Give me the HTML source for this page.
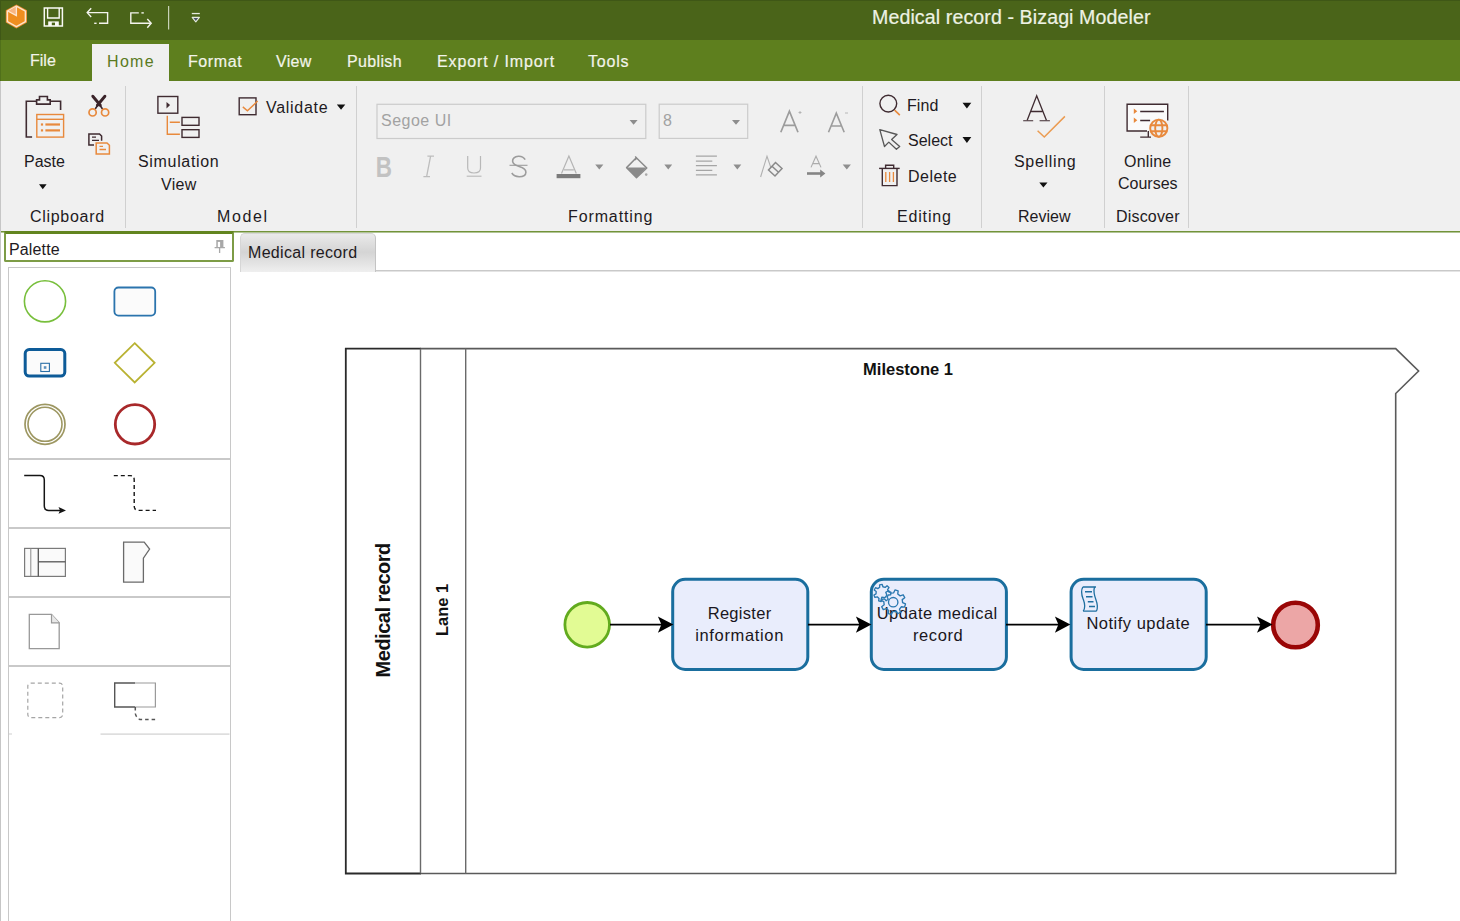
<!DOCTYPE html>
<html><head><meta charset="utf-8">
<style>
*{margin:0;padding:0;box-sizing:border-box}
html,body{width:1460px;height:921px;overflow:hidden;background:#fff;font-family:"Liberation Sans",sans-serif}
.a{position:absolute;white-space:nowrap}
#title{position:absolute;left:0;top:0;width:1460px;height:40px;background:#4a6419}
#menu{position:absolute;left:0;top:40px;width:1460px;height:41px;background:#5e7f1e}
#ribbon{position:absolute;left:0;top:81px;width:1460px;height:150px;background:#f0f0f0}
#gline{position:absolute;left:0;top:231px;width:1460px;height:2px;background:linear-gradient(#729339 50%,#b2c596 50%)}
.mi{position:absolute;top:50px;font-size:16px;color:#f2f4ea;line-height:20px}
.rt{position:absolute;font-size:16px;color:#1e1a22;line-height:20px}
.gl{position:absolute;top:205px;font-size:16px;color:#1e1a22;line-height:20px}
.sep{position:absolute;top:86px;width:1px;height:142px;background:#d0d0d0}
.dd{position:absolute;width:0;height:0;border-left:4px solid transparent;border-right:4px solid transparent;border-top:5px solid #111}
.ddg{position:absolute;width:0;height:0;border-left:4px solid transparent;border-right:4px solid transparent;border-top:5px solid #8a8a8a}
</style></head><body>
<div id="title"></div>
<div id="menu"></div>
<div id="ribbon"></div>
<div id="gline"></div>

<!-- title text -->

<!-- menu -->
<div class="a" style="left:92px;top:44px;width:77px;height:37px;background:#f0f0f0"></div>

<!-- separators -->
<div class="sep" style="left:125px"></div>
<div class="sep" style="left:356px"></div>
<div class="sep" style="left:862px"></div>
<div class="sep" style="left:981px"></div>
<div class="sep" style="left:1104px"></div>
<div class="sep" style="left:1188px"></div>

<!-- group labels -->

<!-- ribbon texts -->

<svg class="a" style="left:0;top:0" width="1460" height="232">
<!-- title bar icons -->
<rect x="0" y="0" width="1460" height="1" fill="#3f5716"/>
<rect x="0" y="0" width="1" height="40" fill="#3f5716"/>
<path d="M16.4,4.5 L27,10.2 V22.6 L16.4,28.4 L5.8,22.6 V10.2 Z" fill="#e98a2a"/>
<path d="M16.4,6.2 L25.4,11.1 V21.7 L16.4,26.7 L7.4,21.7 V11.1 Z" fill="#ef8e20" stroke="#fde4ca" stroke-width="1.5" stroke-linejoin="round"/>
<path d="M16.4,6.6 V15.4 L8,11.3 Z" fill="#f8b683"/>
<path d="M16.4,6.4 V15.6 L8.2,11.2" fill="none" stroke="#fde7d2" stroke-width="1.3"/>
<path d="M44.3,8 H62.4 V26 H44.3 Z" fill="none" stroke="#fafaf6" stroke-width="1.5"/>
<path d="M47.6,8 V18 H59.2 V8" fill="none" stroke="#fafaf6" stroke-width="1.4"/>
<rect x="48.2" y="21.4" width="10.6" height="4.6" fill="#fafaf6"/>
<rect x="51.8" y="22.6" width="3.2" height="2.6" fill="#4a6419"/>
<path d="M87.6,12.6 H107.6 V23.3 H99" fill="none" stroke="#f4f4ee" stroke-width="1.4"/>
<path d="M91.2,8.2 L87.2,12.6 L91.2,17" fill="none" stroke="#f4f4ee" stroke-width="1.4"/>
<path d="M94.2,23.3 H96.6" stroke="#f4f4ee" stroke-width="1.4"/>
<path d="M138.8,12.9 H130.8 V23.3 H150.6" fill="none" stroke="#f4f4ee" stroke-width="1.4"/>
<path d="M141.4,12.9 H143.8" stroke="#f4f4ee" stroke-width="1.4"/>
<path d="M147.3,19 L151.2,23.3 L147.3,27.7" fill="none" stroke="#f4f4ee" stroke-width="1.4"/>
<rect x="168" y="6" width="1.2" height="23.5" fill="#c8d2b8"/>
<rect x="191.8" y="12.9" width="8" height="1.3" fill="#e6ebdf"/>
<path d="M192.2,17.4 H199.4 L195.8,21.8 Z" fill="#4b5566" stroke="#e6ebdf" stroke-width="1.1" stroke-linejoin="round"/>
<!-- paste -->
<g fill="none" stroke="#3f2b31" stroke-width="1.6">
<path d="M32.1,137 H26.3 V101.3 H36.6 M50.2,101.3 H60.6 V110"/>
<path d="M36.6,104.1 V99.9 H39.5 V96.5 H47.4 V99.9 H50.2 V104.1 Z"/>
</g>
<g fill="none" stroke="#e8893c" stroke-width="1.4">
<rect x="36.8" y="114.5" width="26.8" height="22.6"/>
<path d="M36.8,119.3 H63.6"/>
</g>
<g fill="#e8893c">
<rect x="40.9" y="123.4" width="2.2" height="2.2"/><rect x="45.4" y="123.4" width="14.6" height="2.2"/>
<rect x="40.9" y="129.3" width="2.2" height="2.2"/><rect x="45.4" y="129.3" width="14.6" height="2.2"/>
</g>
<!-- scissors -->
<path d="M92.8,96.2 L100.3,105.2 M104.9,96.2 L97.4,105.2" stroke="#3a2329" stroke-width="2.9" stroke-linecap="round"/>
<path d="M98.8,103.5 L95.2,109 M98.8,103.5 L102.5,109" stroke="#3a2329" stroke-width="1.6"/>
<circle cx="92.6" cy="112.4" r="3.6" fill="none" stroke="#e8893c" stroke-width="1.7"/>
<circle cx="105.1" cy="112.4" r="3.6" fill="none" stroke="#e8893c" stroke-width="1.7"/>
<!-- copy -->
<path d="M94,145 H88.9 V133.9 H99.5 L101.6,136 V140.7" fill="none" stroke="#3f2b31" stroke-width="1.5"/>
<path d="M92,137.1 H96 M92,140.4 H99" stroke="#3f2b31" stroke-width="1.3"/>
<path d="M96.2,142.9 H107 L109.4,145.2 V154 H96.2 Z" fill="none" stroke="#e8893c" stroke-width="1.5"/>
<path d="M99.5,146.3 H103 M99.5,149.5 H106" stroke="#e8893c" stroke-width="1.3"/>
<!-- simulation view -->
<rect x="157.9" y="96.5" width="19.9" height="16.7" fill="none" stroke="#3f2b31" stroke-width="1.4"/>
<path d="M166.5,101.9 L170.1,105.1 L166.5,108.4 Z" fill="#3f2b31"/>
<path d="M167.3,115.7 V134.3 H179.9 M169.8,122.2 H179.9" fill="none" stroke="#e8893c" stroke-width="1.4"/>
<rect x="182" y="117.4" width="17" height="7.9" fill="none" stroke="#3f2b31" stroke-width="1.4"/>
<rect x="182" y="129.7" width="17" height="7.7" fill="none" stroke="#3f2b31" stroke-width="1.4"/>
<!-- validate -->
<rect x="239.2" y="97.9" width="16.8" height="16.8" fill="none" stroke="#3f2b31" stroke-width="1.4"/>
<path d="M242.8,106.9 L247.4,110.7 L257.7,101.1" fill="none" stroke="#e8893c" stroke-width="1.4"/>
<!-- formatting combos -->
<rect x="377" y="104.3" width="268.8" height="34.2" fill="none" stroke="#cbcbcb" stroke-width="1.2"/>
<rect x="659.2" y="104.2" width="88.5" height="34.2" fill="none" stroke="#cbcbcb" stroke-width="1.2"/>
<path d="M629.6,120 H637.6 L633.6,124.7 Z M732,120 H740 L736,124.7 Z" fill="#8d8d8d"/>
<path d="M780.8,132.2 L789.4,111.2 L798,132.2 M783.6,125.4 H795.2" fill="none" stroke="#9c9c9c" stroke-width="1.7"/>
<path d="M828.5,132.2 L836.3,113.2 L844.2,132.2 M831,126 H841.6" fill="none" stroke="#9c9c9c" stroke-width="1.6"/>
<path d="M798.5,112.5 H801.5 M800,111 V114" stroke="#b0b0b0" stroke-width="0.9"/>
<path d="M845,113 H848" stroke="#b0b0b0" stroke-width="0.9"/>
<!-- B I U S A -->
<text x="375.8" y="176.8" font-family="Liberation Sans" font-weight="bold" font-size="29.6" fill="#c2c2c2" transform="translate(375.8 176.8) scale(0.76 1) translate(-375.8 -176.8)">B</text>
<path d="M430.6,156.2 L426.6,176.6 M427.4,156.2 H434 M423.4,176.6 H430" fill="none" stroke="#bdbdbd" stroke-width="1.3"/>
<path d="M467.7,156 V168 Q467.7,173 474,173 Q480.5,173 480.5,168 V156" fill="none" stroke="#b8b8b8" stroke-width="1.2"/>
<path d="M466.7,176.2 H481.5" stroke="#b8b8b8" stroke-width="1.1"/>
<path d="M525.2,159.6 C523.5,156.8 520.6,156.1 518.4,156.2 C514.6,156.4 512.4,158.6 512.6,161.3 C512.8,164.4 516,165.6 519.2,166.6 C523,167.8 526,169.2 525.9,172.2 C525.8,175 523,176.7 519.2,176.7 C515.8,176.7 513.2,175.3 511.8,173" fill="none" stroke="#9c9c9c" stroke-width="1.6"/>
<path d="M509.5,165.3 H527.5" stroke="#9c9c9c" stroke-width="1.1"/>
<path d="M561.5,173.5 L568.9,156 L576.3,173.5 M564,169.8 H573.8" fill="none" stroke="#b4b4b4" stroke-width="1.2"/>
<rect x="556.6" y="174" width="23.8" height="4.2" fill="#7b7b7b"/>
<path d="M595.2,164.4 H603.4 L599.3,169.4 Z M664.3,164.6 H672.2 L668.25,169.4 Z M733.4,164.6 H741.3 L737.35,169.4 Z M842.7,164.6 H850.9 L846.8,169.4 Z" fill="#8f8f8f"/>
<!-- bucket -->
<path d="M636.3,157.8 L646.8,168 L636.5,177.6 L626.6,167.6 Z" fill="none" stroke="#8a8a8a" stroke-width="1.5" stroke-linejoin="round"/>
<path d="M635.3,156.3 L636.6,158.3 L634.8,160" fill="none" stroke="#8a8a8a" stroke-width="1.4"/>
<path d="M627,167.5 H646.5 L636.5,177.6 Z" fill="#8a8a8a"/>
<circle cx="646.2" cy="174.6" r="1.3" fill="#aaa"/>
<!-- align -->
<path d="M695.9,156.2 H716.9 M695.9,161.1 H712.3 M695.9,165.6 H716.9 M695.9,170.3 H712.3 M695.9,174.8 H716.9" stroke="#a5a5a5" stroke-width="1.2"/>
<!-- clear format -->
<path d="M760.6,177 L767,156.2 L771,168" fill="none" stroke="#b0b0b0" stroke-width="1.1"/>
<path d="M775.5,162.5 L782,168.5 L775,176 L768.5,170 Z M772,166.3 L778.5,172.2" fill="none" stroke="#8a8a8a" stroke-width="1.5"/>
<!-- A arrow -->
<path d="M811,167.4 L816,156.2 L821,167.4 M812.8,163.6 H819.3" fill="none" stroke="#acacac" stroke-width="1.1"/>
<path d="M807,173.5 H821" stroke="#858585" stroke-width="2.6"/>
<path d="M820.2,169.5 L825.4,173.5 L820.2,177.5 Z" fill="#858585"/>
<!-- find select delete -->
<circle cx="888.3" cy="103.6" r="8.4" fill="none" stroke="#3f2b31" stroke-width="1.4"/>
<path d="M894.6,110.2 L899.8,115.2" stroke="#e8893c" stroke-width="1.6"/>
<path d="M879.8,129.6 L897,134.5 L891.6,139.4 L899.7,146.5 L896.4,149.2 L888.8,142.1 L884.5,146.5 Z" fill="none" stroke="#575757" stroke-width="1.3" stroke-linejoin="round"/>
<path d="M879.1,168.4 H899.7" stroke="#3f2b31" stroke-width="1.4"/>
<path d="M885.6,168.4 V165.2 H893.7 V168.4" fill="none" stroke="#3f2b31" stroke-width="1.4"/>
<path d="M882.3,168.4 V185.6 H897 V168.4" fill="none" stroke="#3f2b31" stroke-width="1.4"/>
<path d="M885.8,172 V182 M889.6,172 V182 M893.4,172 V182" stroke="#e8893c" stroke-width="1.3"/>
<!-- spelling -->
<path d="M1027.2,120.3 L1036.7,95.8 L1046.4,120.3 M1031,111.5 H1042.3" fill="none" stroke="#3f2b31" stroke-width="1.3"/>
<path d="M1023.2,120.8 H1033.2 M1039.6,120.8 H1049.9" stroke="#3f2b31" stroke-width="1.1"/>
<path d="M1037.6,130.8 L1044.3,137 L1064.9,116.4" fill="none" stroke="#eb9c52" stroke-width="1.5"/>
<!-- online courses -->
<path d="M1167.7,120.5 V104.2 H1127.1 V131 H1147" fill="#fafafa" stroke="#3f2b31" stroke-width="1.4"/>
<path d="M1148.3,131 V137 M1140.2,137.1 H1151" stroke="#3f2b31" stroke-width="1.4"/>
<path d="M1140.2,111.6 H1163.9 M1140.2,120.5 H1150.1" stroke="#3f2b31" stroke-width="1.5"/>
<path d="M1133.8,108.5 L1137.3,111.3 L1133.8,114 Z M1133.8,117.5 L1137.3,120.3 L1133.8,123 Z" fill="#e8893c"/>
<circle cx="1158.8" cy="128.2" r="9.9" fill="#f0f0f0"/>
<g fill="none" stroke="#e8893c" stroke-width="1.9">
<circle cx="1158.8" cy="128.2" r="8.6"/>
<ellipse cx="1158.8" cy="128.2" rx="3.6" ry="8.6"/>
<path d="M1150.5,125.3 H1167.1 M1150.5,131.3 H1167.1"/>
</g>
<!-- dropdowns dark -->
<path d="M39,184.3 H46.6 L42.8,189.2 Z M336.8,104.5 H345.3 L341.05,109.8 Z M962.5,102.8 H971.3 L966.9,108.4 Z M962.5,137 H971.3 L966.9,142.9 Z M1039.3,182.5 H1047.5 L1043.4,187.6 Z" fill="#111"/>
</svg>
<!-- palette header -->
<div class="a" style="left:4px;top:231px;width:230px;height:31px;border:2px solid #7d9c46;border-top:3px solid #62851f;border-radius:0 0 2px 2px;background:#fff"></div>
<svg class="a" style="left:210px;top:236px" width="20" height="22"><path d="M6.3,4 H13.4 V11.9 H6.3 Z M8,5.9 V11.9 M11.7,5.9 V11.9" fill="#a8a8a8" stroke="none"/><rect x="7.8" y="5.9" width="2.3" height="5.3" fill="#fff"/><path d="M4.6,11.6 H14.9 M9.6,11.6 V17" fill="none" stroke="#a8a8a8" stroke-width="1.3"/></svg>
<!-- palette panel -->
<div class="a" style="left:0;top:81px;width:1px;height:840px;background:#c6c6c6"></div>
<div class="a" style="left:0;top:40px;width:1px;height:41px;background:#50701a"></div>
<div class="a" style="left:8px;top:267px;width:223px;height:660px;border:1px solid #c8c8c8;border-bottom:none"></div>

<svg class="a" style="left:0;top:0" width="240" height="921">
<g fill="#c9c9c9">
<rect x="9" y="458" width="221" height="2"/>
<rect x="9" y="527" width="221" height="2"/>
<rect x="9" y="596" width="221" height="2"/>
<rect x="9" y="665" width="221" height="2"/>
</g>
<rect x="9" y="733.5" width="3" height="1" fill="#d0d0d0"/>
<rect x="100.5" y="733.5" width="129" height="1.2" fill="#d0d0d0"/>
<circle cx="45" cy="301.3" r="20.6" fill="none" stroke="#78bf3c" stroke-width="1.6"/>
<rect x="114.4" y="287.5" width="40.8" height="28.1" rx="4" fill="#fbfbfb" stroke="#2b74ad" stroke-width="1.8"/>
<rect x="25.2" y="349.6" width="39.6" height="26.4" rx="4" fill="#fbfbfb" stroke="#0d5b98" stroke-width="3"/>
<rect x="40.8" y="363.3" width="8.6" height="8.2" fill="none" stroke="#2b6fa6" stroke-width="1.1"/>
<rect x="43.8" y="366.2" width="2.6" height="2.6" fill="#5a90bd"/>
<path d="M134.7,343.2 L154.6,362.8 L134.7,382.4 L114.8,362.8 Z" fill="none" stroke="#b9b232" stroke-width="1.8" stroke-linejoin="miter"/>
<circle cx="45" cy="424.3" r="20.0" fill="none" stroke="#9d9762" stroke-width="1.7"/>
<circle cx="45" cy="424.3" r="17.0" fill="none" stroke="#9d9762" stroke-width="1.6"/>
<circle cx="135" cy="424.3" r="19.7" fill="none" stroke="#a8282a" stroke-width="2.8"/>
<path d="M24.2,475.6 H40 Q44.3,475.6 44.3,480 V506 Q44.3,510.4 48.6,510.4 H61" fill="none" stroke="#151515" stroke-width="1.5"/>
<path d="M66,510.4 L58.5,507 L60,510.4 L58.5,513.8 Z" fill="#151515"/>
<path d="M113.8,475.6 H130 Q134.2,475.6 134.2,480 V506 Q134.2,510.4 138.5,510.4 H156" fill="none" stroke="#151515" stroke-width="1.4" stroke-dasharray="4,3"/>
<rect x="24.6" y="548.4" width="40.8" height="28" fill="#fafafa" stroke="#7a7a7a" stroke-width="1.2"/>
<line x1="30.8" y1="548.4" x2="30.8" y2="576.4" stroke="#8a8a8a" stroke-width="1"/>
<line x1="38.3" y1="548.4" x2="38.3" y2="576.4" stroke="#555" stroke-width="1.3"/>
<line x1="38.3" y1="561.8" x2="65.4" y2="561.8" stroke="#555" stroke-width="1.3"/>
<path d="M123.6,542.2 H144.2 L149.6,549 L143.4,558.2 V582.2 H123.6 Z" fill="#fafafa" stroke="#6a6a6a" stroke-width="1.3"/>
<path d="M29.3,614.3 H51.5 L59.2,622.8 V648.7 H29.3 Z" fill="#fff" stroke="#999" stroke-width="1.3"/>
<path d="M51.5,614.3 V622.8 H59.2" fill="#e8e8e8" stroke="#999" stroke-width="1.2"/>
<rect x="27.8" y="683.1" width="34.9" height="34.5" rx="3" fill="none" stroke="#a5a5a5" stroke-width="1.2" stroke-dasharray="4,3"/>
<path d="M135,683 H155.4 V707 H135" fill="none" stroke="#9a9a9a" stroke-width="1.2"/>
<path d="M135,683 H114.7 V707 H135" fill="none" stroke="#555" stroke-width="1.4"/>
<path d="M135.3,707 V713 Q135.5,717 140,719.6 H157" fill="none" stroke="#555" stroke-width="1.5" stroke-dasharray="3.5,3"/>
</svg>
<!-- tab -->
<div class="a" style="left:376px;top:270px;width:1084px;height:2px;background:linear-gradient(#c9c9c9 50%,#e4e4e4 50%)"></div>
<div class="a" style="left:240px;top:233px;width:136px;height:39px;border:1px solid #d6d6d6;border-right-color:#c4c4c4;border-bottom:none;border-radius:5px 5px 0 0;background:linear-gradient(#eaeaea,#d4d4d4 48%,#efefef)"></div>

<!-- diagram -->
<svg class="a" style="left:0;top:0" width="1460" height="921">
<defs><path id="ah" d="M0,0 L-15.5,-8.2 L-12,0 L-15.5,8.2 Z" fill="#000"/></defs>
<!-- pool -->
<path d="M420.5,348.6 H1395.7 L1418.6,371 L1395.7,393.5 V873.5 H420.5" fill="none" stroke="#5a5a5a" stroke-width="1.6"/>
<path d="M421,348.6 H345.8 V873.5 H421" fill="none" stroke="#2a2a2a" stroke-width="1.8" stroke-linejoin="miter"/>
<line x1="420.5" y1="348.6" x2="420.5" y2="873.5" stroke="#6a6a6a" stroke-width="1.4"/>
<line x1="465.7" y1="348.6" x2="465.7" y2="873.5" stroke="#6a6a6a" stroke-width="1.4"/>
<text x="389.6" y="610.3" transform="rotate(-90 389.6 610.3)" text-anchor="middle" font-family="Liberation Sans" font-weight="bold" font-size="20" letter-spacing="-0.5" fill="#111">Medical record</text>
<text x="448.4" y="609.9" transform="rotate(-90 448.4 609.9)" text-anchor="middle" font-family="Liberation Sans" font-weight="bold" font-size="16.5" fill="#111">Lane 1</text>
<text x="908" y="375.1" text-anchor="middle" font-family="Liberation Sans" font-weight="bold" font-size="16.5" fill="#111">Milestone 1</text>
<!-- events -->
<circle cx="587.2" cy="624.8" r="22.3" fill="#e2fb94" stroke="#62ab1e" stroke-width="2.8"/>
<circle cx="1295.5" cy="625" r="22.3" fill="#eca6a6" stroke="#9a0606" stroke-width="4.6"/>
<!-- tasks -->
<rect x="672.7" y="579.3" width="135.1" height="90.1" rx="12.5" fill="#e9edfc" stroke="#1a6e9e" stroke-width="3"/>
<rect x="871.3" y="579.3" width="135.1" height="90.1" rx="12.5" fill="#e9edfc" stroke="#1a6e9e" stroke-width="3"/>
<rect x="1071.1" y="579.3" width="135.1" height="90.1" rx="12.5" fill="#e9edfc" stroke="#1a6e9e" stroke-width="3"/>
<g font-family="Liberation Sans" font-size="16.5" fill="#1a1620" text-anchor="middle">
<text x="739.6" y="619.2" letter-spacing="0.3">Register</text>
<text x="739.6" y="640.5" letter-spacing="0.65">information</text>
<text x="937.2" y="619.2" letter-spacing="0.45">Update medical</text>
<text x="938.2" y="640.5" letter-spacing="0.6">record</text>
<text x="1138.3" y="628.7" letter-spacing="0.5">Notify update</text>
</g>
<!-- flows -->
<line x1="610" y1="624.6" x2="662" y2="624.6" stroke="#000" stroke-width="1.6"/>
<use href="#ah" x="673.4" y="624.6"/>
<line x1="808" y1="624.6" x2="860" y2="624.6" stroke="#000" stroke-width="1.6"/>
<use href="#ah" x="871.4" y="624.6"/>
<line x1="1006" y1="624.6" x2="1059" y2="624.6" stroke="#000" stroke-width="1.6"/>
<use href="#ah" x="1070.4" y="624.6"/>
<line x1="1206" y1="624.6" x2="1261" y2="624.6" stroke="#000" stroke-width="1.6"/>
<use href="#ah" x="1272.5" y="624.6"/>
<!-- gear -->
<g fill="none" stroke="#2a78b0" stroke-width="1.35" stroke-linejoin="round">
<path d="M888.47,591.75 L890.86,592.21 L890.71,594.82 L888.28,594.99 L887.13,597.05 L888.26,599.20 L886.12,600.70 L884.48,598.91 L882.15,599.30 L881.17,601.53 L878.66,600.79 L879.03,598.39 L877.28,596.81 L874.93,597.43 L873.94,595.01 L876.05,593.81 L876.19,591.45 L874.24,590.00 L875.52,587.72 L877.77,588.62 L879.71,587.26 L879.62,584.83 L882.20,584.40 L882.91,586.73 L885.17,587.39 L887.02,585.81 L888.96,587.56 L887.58,589.56 Z"/>
<path d="M902.59,602.67 L905.47,603.98 L904.57,607.16 L901.42,606.75 L899.51,609.17 L900.62,612.14 L897.73,613.74 L895.80,611.23 L892.73,611.59 L891.42,614.47 L888.24,613.57 L888.65,610.42 L886.23,608.51 L883.26,609.62 L881.66,606.73 L884.17,604.80 L883.81,601.73 L880.93,600.42 L881.83,597.24 L884.98,597.65 L886.89,595.23 L885.78,592.26 L888.67,590.66 L890.60,593.17 L893.67,592.81 L894.98,589.93 L898.16,590.83 L897.75,593.98 L900.17,595.89 L903.14,594.78 L904.74,597.67 L902.23,599.60 Z"/>
<circle cx="893.2" cy="602.2" r="4.7"/>
</g>
<!-- script -->
<g fill="none" stroke="#1f6fa0" stroke-width="1.3">
<path d="M1082.8,587 H1096 M1083.2,611.2 H1096.4"/>
<path d="M1082.8,587 C1080,592 1082,596 1083.5,600 C1085,604 1085.5,608 1083.2,611.2"/>
<path d="M1094.5,587 C1093,592 1094.5,596 1096,600 C1097.5,604 1098,608 1096.4,611.2"/>
<path d="M1085,591.7 H1092 M1086,596.8 H1092.5 M1087.8,601.8 H1093.5 M1089,606.5 H1095" stroke-width="1.5"/>
</g>
</svg>
<!--TEXTS-->
<div class="a" style="left:872px;top:6.8px;font-size:19.6px;letter-spacing:0.1px;color:#eef2e4;line-height:20px;-webkit-text-stroke:0.2px #eef2e4">Medical record - Bizagi Modeler</div>
<div class="a" style="left:30px;top:51px;font-size:16px;letter-spacing:0px;color:#f2f4ea;line-height:20px;-webkit-text-stroke:0.2px #f2f4ea">File</div>
<div class="a" style="left:107px;top:52px;font-size:16px;letter-spacing:1.33px;color:#5a7a22;line-height:20px">Home</div>
<div class="a" style="left:188px;top:52px;font-size:16px;letter-spacing:0.6px;color:#f2f4ea;line-height:20px;-webkit-text-stroke:0.2px #f2f4ea">Format</div>
<div class="a" style="left:276px;top:52px;font-size:16px;letter-spacing:0.27px;color:#f2f4ea;line-height:20px;-webkit-text-stroke:0.2px #f2f4ea">View</div>
<div class="a" style="left:347px;top:52px;font-size:16px;letter-spacing:0.35px;color:#f2f4ea;line-height:20px;-webkit-text-stroke:0.2px #f2f4ea">Publish</div>
<div class="a" style="left:437px;top:52px;font-size:16px;letter-spacing:0.87px;color:#f2f4ea;line-height:20px;-webkit-text-stroke:0.2px #f2f4ea">Export / Import</div>
<div class="a" style="left:588px;top:52px;font-size:16px;letter-spacing:0.8px;color:#f2f4ea;line-height:20px;-webkit-text-stroke:0.2px #f2f4ea">Tools</div>
<div class="a" style="left:24px;top:152px;font-size:16px;letter-spacing:0px;color:#1e1a22;line-height:20px">Paste</div>
<div class="a" style="left:30px;top:207px;font-size:16px;letter-spacing:0.7px;color:#1e1a22;line-height:20px">Clipboard</div>
<div class="a" style="left:138px;top:152px;font-size:16px;letter-spacing:0.67px;color:#1e1a22;line-height:20px">Simulation</div>
<div class="a" style="left:161px;top:175px;font-size:16px;letter-spacing:0.27px;color:#1e1a22;line-height:20px">View</div>
<div class="a" style="left:217px;top:207px;font-size:16px;letter-spacing:1.6px;color:#1e1a22;line-height:20px">Model</div>
<div class="a" style="left:266px;top:97.5px;font-size:16px;letter-spacing:0.7px;color:#1e1a22;line-height:20px">Validate</div>
<div class="a" style="left:381px;top:111px;font-size:16px;letter-spacing:0.5px;color:#a2a2a2;line-height:20px">Segoe UI</div>
<div class="a" style="left:663px;top:111px;font-size:16px;letter-spacing:0px;color:#a2a2a2;line-height:20px">8</div>
<div class="a" style="left:568px;top:207px;font-size:16px;letter-spacing:0.88px;color:#1e1a22;line-height:20px">Formatting</div>
<div class="a" style="left:907px;top:96px;font-size:16px;letter-spacing:0.1px;color:#1e1a22;line-height:20px">Find</div>
<div class="a" style="left:908px;top:130.5px;font-size:16px;letter-spacing:0px;color:#1e1a22;line-height:20px">Select</div>
<div class="a" style="left:908px;top:166.5px;font-size:16px;letter-spacing:0.5px;color:#1e1a22;line-height:20px">Delete</div>
<div class="a" style="left:897px;top:207px;font-size:16px;letter-spacing:0.83px;color:#1e1a22;line-height:20px">Editing</div>
<div class="a" style="left:1014px;top:152px;font-size:16px;letter-spacing:0.67px;color:#1e1a22;line-height:20px">Spelling</div>
<div class="a" style="left:1018px;top:207px;font-size:16px;letter-spacing:0px;color:#1e1a22;line-height:20px">Review</div>
<div class="a" style="left:1124px;top:152px;font-size:16px;letter-spacing:0.2px;color:#1e1a22;line-height:20px">Online</div>
<div class="a" style="left:1118px;top:174px;font-size:16px;letter-spacing:0px;color:#1e1a22;line-height:20px">Courses</div>
<div class="a" style="left:1116px;top:207px;font-size:16px;letter-spacing:0.18px;color:#1e1a22;line-height:20px">Discover</div>
<div class="a" style="left:9px;top:239.5px;font-size:16px;letter-spacing:0.15px;color:#1e1a22;line-height:20px">Palette</div>
<div class="a" style="left:248px;top:243px;font-size:16px;letter-spacing:0.32px;color:#1e1a22;line-height:20px">Medical record</div>
<!--/TEXTS-->
</body></html>
